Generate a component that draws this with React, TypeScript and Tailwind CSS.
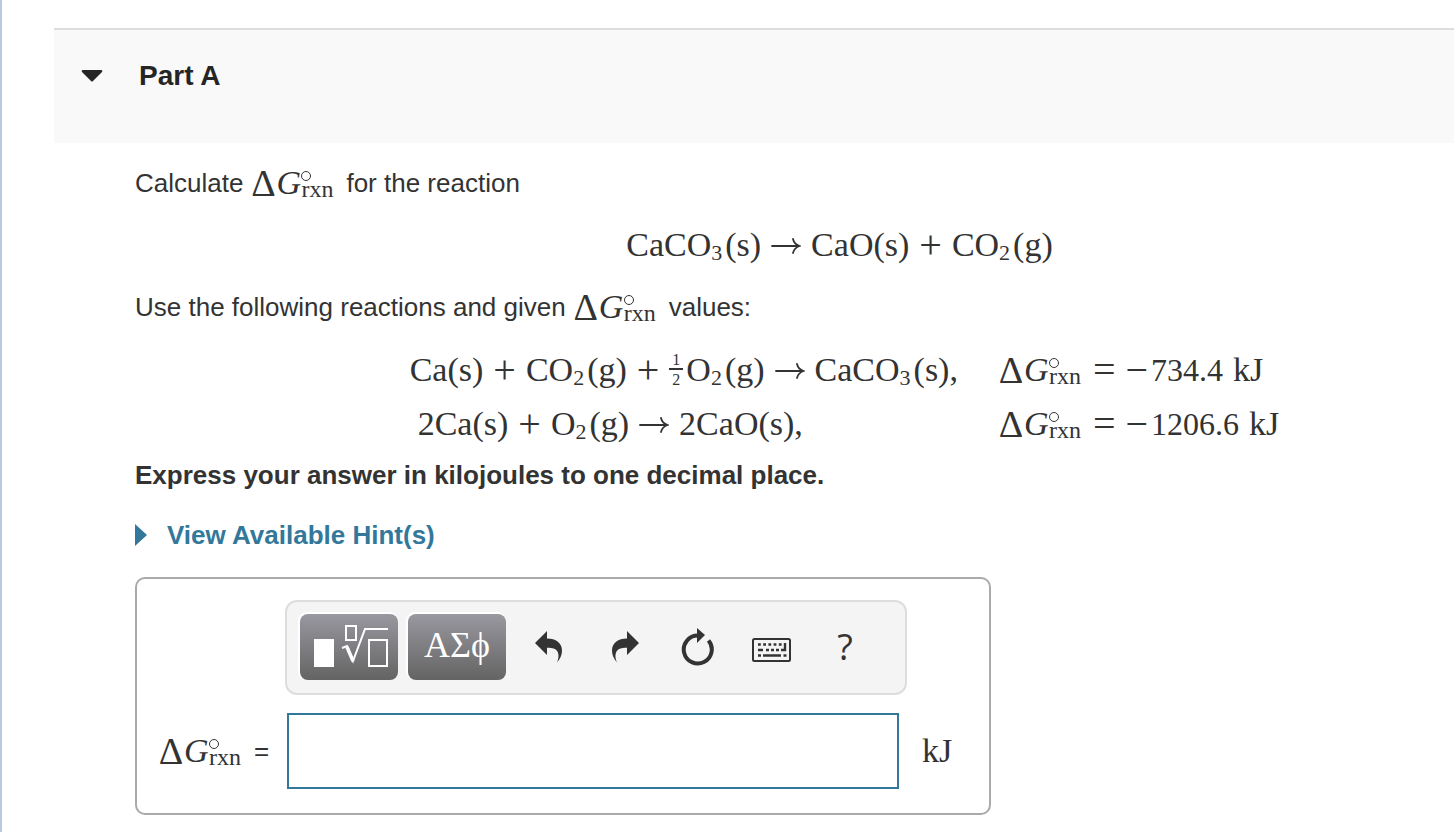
import type { ReactNode } from 'react'

function DeltaG() {
  return (
    <span className="inline-flex items-center font-['Liberation_Serif',serif] text-[34px] leading-none">
      <span className="w-[26px] text-center text-[38px] leading-[34px]">Δ</span>
      <i className="w-[25px]">G</i>
      <span className="flex flex-col pt-[6px] text-2xl leading-none">
        <span className="h-[10px] w-[10px] rounded-full border border-current" />
        <span className="-mt-[4px]">rxn</span>
      </span>
    </span>
  )
}

function Sub({ children }: { children: ReactNode }) {
  return <sub className="bottom-0 mr-[3px] inline-block translate-y-1 align-baseline text-[22px] leading-none">{children}</sub>
}

function Op({ children }: { children: ReactNode }) {
  return <span className="text-[40px] leading-none">{children}</span>
}

function Arrow() {
  return (
    <svg viewBox="0 0 30 20" className="h-5 w-[30px]" fill="none" stroke="currentColor" strokeWidth="1.8" strokeLinecap="round" role="img" aria-label="yields">
      <path d="M1 11h27M22 4c.8 3.600 3 5.800 6.500 7c-3.500 1.200-5.700 3.400-6.500 7" />
    </svg>
  )
}

function Half() {
  return (
    <span className="-mr-[7px] flex flex-col items-center text-base leading-none">
      <span className="border-b-2 border-current px-[3px]">1</span>
      <span className="pt-[2px]">2</span>
    </span>
  )
}

function Equation({ children, className = '' }: { children: ReactNode; className?: string }) {
  return (
    <div className={`flex items-center gap-[10px] font-['Liberation_Serif',serif] text-[34px] leading-none whitespace-nowrap ${className}`}>
      {children}
    </div>
  )
}

function Energy({ value }: { value: string }) {
  return (
    <Equation>
      <DeltaG />
      <span className="flex items-center gap-[10px] pl-[2px]">
        <Op>=</Op>
        <span className="flex items-center gap-[3px]">
          <Op>−</Op>
          <span className="text-[32px]">{value}</span>
        </span>
        <span>kJ</span>
      </span>
    </Equation>
  )
}

function ToolButton({ label, children }: { label: string; children: ReactNode }) {
  return (
    <button type="button" aria-label={label} className="flex h-16 w-[74px] items-center justify-center text-[#333]">
      {children}
    </button>
  )
}

const darkButton =
  'flex h-[66px] w-[98px] items-center justify-center rounded-lg bg-linear-to-b from-[#9a98a0] to-[#646464] text-white shadow-[-1px_-1px_0_1px_#fff]'

function Toolbar() {
  return (
    <div className="ml-[148px] flex h-[95px] w-[622px] items-center rounded-xl border-2 border-[#ddd] bg-[#f4f4f4] pb-[2px] pl-[13px]">
      <button type="button" aria-label="Templates" className={`${darkButton} mr-[10px]`}>
        <svg viewBox="0 0 98 66" className="h-[66px] w-[98px]" fill="none" stroke="currentColor">
          <path d="M14 25h20v28H14z" fill="currentColor" stroke="none" />
          <path d="M46 12h10v14H46z" strokeWidth="2" />
          <path d="M69 26h18v26H69z" strokeWidth="2" />
          <path d="M42 34l5-2 6 15 12-32h23" strokeWidth="2" />
          <path d="M47 33l6 14" strokeWidth="3.500" />
        </svg>
      </button>
      <button type="button" aria-label="Greek symbols" className={`${darkButton} mr-[6px] pb-1 font-['Liberation_Serif',serif] text-4xl`}>
        ΑΣϕ
      </button>
      <ToolButton label="Undo">
        <svg viewBox="0 0 28 32" className="h-8 w-7" fill="currentColor">
          <path d="M0 12L12 0v7.500c9 0 15 4.500 15 12c0 5-2 8.500-5 12c3-6.500 2-14-6-14.500c-1.500-.2-2.500-.2-4-.2v7.200z" />
        </svg>
      </ToolButton>
      <ToolButton label="Redo">
        <svg viewBox="-4 0 32 32" className="h-8 w-8" fill="currentColor">
          <path d="M28 12L16 0v7.500c-9 0-15 4.500-15 12c0 5 2 8.500 5 12c-3-6.500-2-14 6-14.500c1.500-.2 2.500-.2 4-.2v7.200z" />
        </svg>
      </ToolButton>
      <ToolButton label="Reset">
        <svg viewBox="0 0 34 38" className="h-[38px] w-[34px]" fill="none">
          <path d="M18 7.500A14 14 0 1 0 28.500 12.500" stroke="currentColor" strokeWidth="4" />
          <path d="M17 0l8 7-8 8z" fill="currentColor" />
        </svg>
      </ToolButton>
      <ToolButton label="Keyboard">
        <svg viewBox="0 -3 40 34" className="h-[34px] w-10" fill="none" stroke="currentColor">
          <rect x="2" y="6" width="37" height="22" rx="1.500" strokeWidth="2" />
          <path d="M7 11.500h24" strokeWidth="2.400" strokeDasharray="2.800 2.400" />
          <path d="M7 17h5M15 17h3M20 17h3M25 17h3" strokeWidth="2.400" />
          <path d="M30 17h4v-7" strokeWidth="2.400" />
          <path d="M7 22.500h3M12 22.500h18M32.500 22.500h3" strokeWidth="2.400" />
        </svg>
      </ToolButton>
      <ToolButton label="Help">
        <span className="font-['Open_Sans',sans-serif] text-4xl">?</span>
      </ToolButton>
    </div>
  )
}

export default function App() {
  return (
    <main className="min-h-screen overflow-x-hidden border-l-2 border-[#b9c9df] bg-white pt-7 pl-[52px] font-['Liberation_Sans',Arial,sans-serif] text-[26px] text-[#333]">
      <header className="flex h-[115px] items-start border-t-2 border-[#ddd] bg-[#f9f9f9] pt-7 pl-[27px]">
        <button type="button" aria-expanded="true" className="flex items-center gap-9 text-[#252525]">
          <svg viewBox="0 0 22 12" className="h-3 w-[22px]" fill="currentColor">
            <path d="M2 0h18q2 0 1 2l-9 9q-1 1-2 0l-9-9q-1-2 1-2z" />
          </svg>
          <h2 className="text-[28px] leading-9 font-bold">Part A</h2>
        </button>
      </header>

      <section className="pt-[9px] pl-[81px]">
        <p className="flex h-[62px] items-center whitespace-nowrap">
          <span className="mr-[7px]">Calculate</span>
          <DeltaG />
          <span className="ml-[13px]">for the reaction</span>
        </p>

        <Equation className="h-[62px] justify-center pl-[90px]">
          <span>CaCO<Sub>3</Sub>(s)</span>
          <Arrow />
          <span>CaO(s)</span>
          <Op>+</Op>
          <span>CO<Sub>2</Sub>(g)</span>
        </Equation>

        <p className="flex h-[62px] items-center whitespace-nowrap">
          <span className="mr-[7px]">Use the following reactions and given</span>
          <DeltaG />
          <span className="ml-[13px]">values:</span>
        </p>

        <div className="grid auto-rows-[54px] grid-cols-[auto_auto] items-center justify-center gap-x-10 pt-[5px] pl-[100px]">
          <Equation>
            <span>Ca(s)</span>
            <Op>+</Op>
            <span>CO<Sub>2</Sub>(g)</span>
            <Op>+</Op>
            <Half />
            <span>O<Sub>2</Sub>(g)</span>
            <Arrow />
            <span>CaCO<Sub>3</Sub>(s),</span>
          </Equation>
          <Energy value="734.4" />
          <Equation className="pl-2">
            <span>2Ca(s)</span>
            <Op>+</Op>
            <span>O<Sub>2</Sub>(g)</span>
            <Arrow />
            <span>2CaO(s),</span>
          </Equation>
          <Energy value="1206.6" />
        </div>

        <p className="pt-1 leading-10 font-bold">Express your answer in kilojoules to one decimal place.</p>

        <a href="#hints" className="mt-5 flex items-center gap-5 leading-10 font-bold text-[#33789a]">
          <svg viewBox="0 0 12 22" className="h-[22px] w-3" fill="currentColor">
            <path d="M0 0l12 11L0 22z" />
          </svg>
          View Available Hint(s)
        </a>

        <form className="mt-[22px] w-full max-w-[856px] rounded-[10px] border-2 border-[#aaa] pt-[21px] pb-6">
          <Toolbar />
          <div className="mt-[18px] flex items-center">
            <label htmlFor="answer" className="flex w-[150px] items-center gap-[13px] pl-[21px]">
              <DeltaG />
              <span>=</span>
            </label>
            <input id="answer" type="text" className="h-[76px] w-[612px] border-2 border-[#33789a] bg-white px-3 outline-none" />
            <span className="ml-[23px] font-['Liberation_Serif',serif] text-[34px] leading-none">kJ</span>
          </div>
        </form>
      </section>
    </main>
  )
}
